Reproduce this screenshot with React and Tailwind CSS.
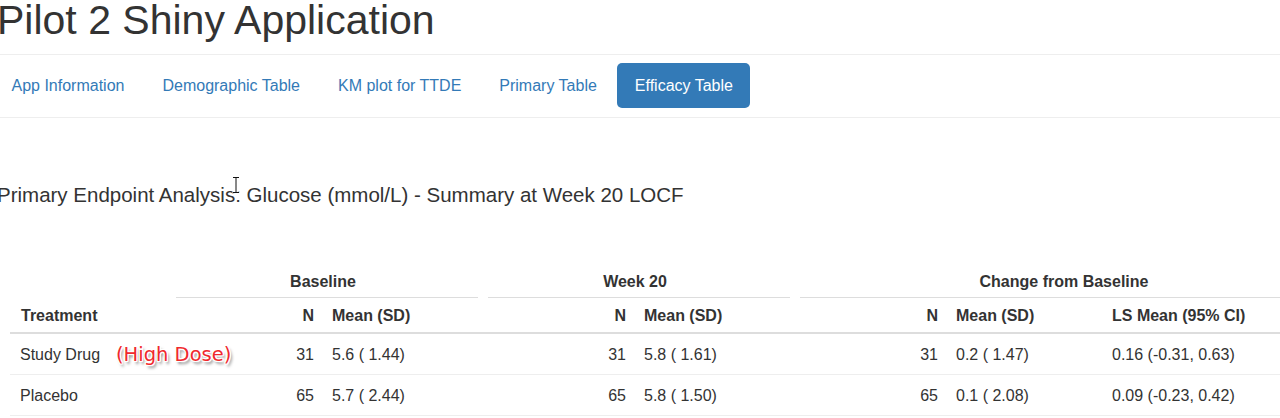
export default function App() {
  const grid =
    "grid grid-cols-[161px_152px_160px_152px_160px_152px_156px_238px] w-[1331px]";
  const rows = [
    ["Study Drug", "31", "5.6 ( 1.44)", "31", "5.8 ( 1.61)", "31", "0.2 ( 1.47)", "0.16 (-0.31, 0.63)"],
    ["Placebo", "65", "5.7 ( 2.44)", "65", "5.8 ( 1.50)", "65", "0.1 ( 2.08)", "0.09 (-0.23, 0.42)"],
  ];
  const tabs = ["App Information", "Demographic Table", "KM plot for TTDE", "Primary Table", "Efficacy Table"];
  return (
    <div className="relative w-[1280px] h-[418px] overflow-hidden bg-white text-[#333] font-['Liberation_Sans',Arial,sans-serif]">
      <h1 className="text-[41px] leading-[45px] font-normal -mt-[2px] -ml-[3px] mb-[11px] whitespace-nowrap">
        Pilot 2 Shiny Application
      </h1>
      <div className="border-t border-[#eee]" />
      <ul className="flex gap-[3px] -ml-[6px] pt-[8px] pb-[9px] text-[16px] leading-[23px]">
        {tabs.map((t) => (
          <li
            key={t}
            className={
              t === "Efficacy Table"
                ? "px-[17.5px] py-[11px] rounded-[5px] bg-[#337ab7] text-white whitespace-nowrap"
                : "px-[17.5px] py-[11px] rounded-[5px] text-[#337ab7] whitespace-nowrap"
            }
          >
            {t}
          </li>
        ))}
      </ul>
      <div className="border-t border-[#eee]" />

      <h4 className="mt-[66px] -ml-[3px] text-[20.5px] leading-[22.5px] font-normal whitespace-nowrap">
        Primary Endpoint Analysis: Glucose (mmol/L) - Summary at Week 20 LOCF
      </h4>

      <div className="ml-[10px] mt-[57px] text-[16px] leading-[23px]">
        <div className={grid}>
          <div />
          <div className="col-span-2 px-[5px]">
            <div className="border-b border-[#ddd] pt-[6px] pb-[4px] pr-[8px] font-bold text-center">Baseline</div>
          </div>
          <div className="col-span-2 px-[5px]">
            <div className="border-b border-[#ddd] pt-[6px] pb-[4px] pr-[8px] font-bold text-center">Week 20</div>
          </div>
          <div className="col-span-3 px-[5px]">
            <div className="border-b border-[#ddd] pt-[6px] pb-[4px] pr-[8px] font-bold text-center">Change from Baseline</div>
          </div>
        </div>
        <div className={grid + " border-b-2 border-[#ddd] font-bold"}>
          <div className="pl-[11px] pt-[6px] pb-[5px]">Treatment</div>
          <div className="pr-[9px] pt-[6px] pb-[5px] text-right">N</div>
          <div className="pl-[9px] pt-[6px] pb-[5px]">Mean (SD)</div>
          <div className="pr-[9px] pt-[6px] pb-[5px] text-right">N</div>
          <div className="pl-[9px] pt-[6px] pb-[5px]">Mean (SD)</div>
          <div className="pr-[9px] pt-[6px] pb-[5px] text-right">N</div>
          <div className="pl-[9px] pt-[6px] pb-[5px]">Mean (SD)</div>
          <div className="pl-[9px] pt-[6px] pb-[5px]">LS Mean (95% CI)</div>
        </div>
        {rows.map((r, i) => (
          <div key={i} className={grid + " border-b border-[#eee]"}>
            <div className="relative pl-[10px] pt-[9px] pb-[8px]">
              {r[0]}
              {i === 0 && (
                <span className="absolute left-[106px] top-[8.5px] text-[19.5px] leading-[25px] text-[#f0282d] font-['DejaVu_Sans',sans-serif] whitespace-nowrap [text-shadow:1px_0_0_#fff,-1px_0_0_#fff,0_1px_0_#fff,0_-1px_0_#fff,1px_1px_0_#fff,-1px_-1px_0_#fff,1px_-1px_0_#fff,-1px_1px_0_#fff,2px_3px_3px_rgba(0,0,0,0.5)]">
                  (High Dose)
                </span>
              )}
            </div>
            <div className="pr-[9px] pt-[9px] pb-[8px] text-right">{r[1]}</div>
            <div className="pl-[9px] pt-[9px] pb-[8px] whitespace-pre">{r[2]}</div>
            <div className="pr-[9px] pt-[9px] pb-[8px] text-right">{r[3]}</div>
            <div className="pl-[9px] pt-[9px] pb-[8px] whitespace-pre">{r[4]}</div>
            <div className="pr-[9px] pt-[9px] pb-[8px] text-right">{r[5]}</div>
            <div className="pl-[9px] pt-[9px] pb-[8px] whitespace-pre">{r[6]}</div>
            <div className="pl-[9px] pt-[9px] pb-[8px] whitespace-pre">{r[7]}</div>
          </div>
        ))}
      </div>

      <svg className="absolute left-[231px] top-[176px]" width="10" height="18" viewBox="0 0 10 18">
        <path d="M1.5 1.5h3v15h-3M8.5 1.5h-3v15h3M5 1.5v15" fill="none" stroke="#fff" strokeWidth="2.5" />
        <path d="M2 1.5h6M5 1.5v15M2 16.5h6" fill="none" stroke="#111" strokeWidth="1" />
      </svg>
    </div>
  );
}
